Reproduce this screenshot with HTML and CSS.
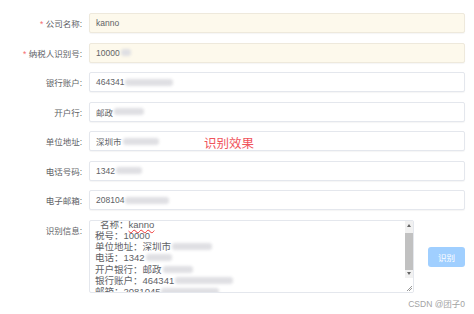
FILE: index.html
```
<!DOCTYPE html>
<html lang="zh">
<head>
<meta charset="utf-8">
<link rel="stylesheet" href="styles.css">
</head>
<body>
<div class="page">
  <form class="form">
    <div class="row">
      <label class="label"><span class="req">*</span> 公司名称:</label>
      <div class="input warn">kanno</div>
    </div>
    <div class="row">
      <label class="label"><span class="req">*</span> 纳税人识别号:</label>
      <div class="input warn">10000<span class="blur b1"></span></div>
    </div>
    <div class="row">
      <label class="label">银行账户:</label>
      <div class="input">464341<span class="blur b2"></span></div>
    </div>
    <div class="row">
      <label class="label">开户行:</label>
      <div class="input">邮政<span class="blur b3"></span></div>
    </div>
    <div class="row">
      <label class="label">单位地址:</label>
      <div class="input">深圳市<span class="blur b4"></span><span class="effect">识别效果</span></div>
    </div>
    <div class="row">
      <label class="label">电话号码:</label>
      <div class="input">1342<span class="blur b5"></span></div>
    </div>
    <div class="row">
      <label class="label">电子邮箱:</label>
      <div class="input">208104<span class="blur b6"></span></div>
    </div>
    <div class="row area-row">
      <label class="label top">识别信息:</label>
      <div class="textarea">
        <div class="lines">
          <div class="line first">名称：<span class="spell">kanno</span></div>
          <div class="line">税号：10000</div>
          <div class="line">单位地址：深圳市<span class="blur b7"></span></div>
          <div class="line">电话：1342<span class="blur b5"></span></div>
          <div class="line">开户银行：邮政<span class="blur b3"></span></div>
          <div class="line">银行账户：464341<span class="blur b8"></span></div>
          <div class="line">邮箱：2081045<span class="blur b8"></span></div>
        </div>
        <div class="scrollbar">
          <span class="arrow up"></span>
          <span class="track"><span class="thumb"></span></span>
          <span class="arrow down"></span>
          <span class="grip"></span>
        </div>
      </div>
      <button type="button" class="btn">识别</button>
    </div>
  </form>
  <div class="mark">CSDN @团子0</div>
</div>
</body>
</html>
```
FILE: styles.css
```
* { box-sizing: border-box; }
html, body { margin: 0; padding: 0; background: #fff; }
body {
  width: 474px; height: 314px; overflow: hidden;
  font-family: "Liberation Sans", "Noto Sans CJK SC", sans-serif;
  color: #606266;
}
.page { position: relative; width: 474px; height: 314px; }
.form {
  display: flex; flex-direction: column; gap: 9.5px;
  padding-top: 13px;
}
.row { display: flex; align-items: center; height: 20px; }
.label {
  width: 89px; flex: none; text-align: right; padding-right: 7px;
  font-size: 8.5px; color: #606266; white-space: nowrap;
}
.req { color: #f56c6c; }
.input {
  position: relative;
  width: 376px; height: 20px; flex: none;
  border: 1px solid #e4e7ed; border-radius: 2px;
  box-shadow: 0 1px 1px rgba(0,0,0,0.04);
  background: #fff;
  display: flex; align-items: center;
  padding-left: 6px;
  font-size: 8.5px; color: #606266; white-space: nowrap;
}
.input.warn { background: #fdf9ec; border-color: #eee9dc; }
.blur {
  display: inline-block; height: 7px; background: #dfdfe3;
  filter: blur(1.5px); border-radius: 3px; margin-left: 1px;
}
.b1 { width: 10px; }
.b2 { width: 48px; }
.b3 { width: 30px; }
.b4 { width: 36px; }
.b5 { width: 26px; }
.b6 { width: 44px; }
.b7 { width: 40px; }
.b8 { width: 58px; }
.effect {
  position: absolute; left: 114px; top: 1px;
  font-size: 12.5px; color: #f0545c; font-family: "Noto Sans CJK SC", sans-serif;
}
.area-row { height: 73px; align-items: stretch; margin-top: 0.5px; }
.label.top { padding-top: 4px; }
.textarea {
  position: relative; width: 325px; height: 73px; flex: none;
  border: 1px solid #e4e7ed; border-radius: 2px; overflow: hidden;
  background: #fff;
}
.lines { margin-top: -2.5px; padding-left: 5px; }
.line { font-size: 9.5px; line-height: 11.3px; color: #606266; white-space: nowrap; }
.line.first { padding-left: 5px; }
.spell { text-decoration: underline wavy #e33; text-decoration-thickness: 0.6px; }
.scrollbar {
  position: absolute; right: 0; top: 0; bottom: 0; width: 8px;
  background: #f1f1f1; display: flex; flex-direction: column;
}
.arrow { height: 9px; position: relative; flex: none; }
.arrow.up::after, .arrow.down::after {
  content: ""; position: absolute; left: 2px; top: 3px;
  border-left: 2px solid transparent; border-right: 2px solid transparent;
}
.arrow.up::after { border-bottom: 3px solid #666; }
.arrow.down::after { border-top: 3px solid #666; }
.track { flex: 1; position: relative; }
.thumb { position: absolute; left: 0; right: 0; top: 3px; height: 37px; background: #c1c1c1; }
.grip { height: 14px; flex: none; background: #fff; position: relative; }
.grip::after {
  content: ""; position: absolute; right: 1px; bottom: 1px; width: 5px; height: 5px;
  background: linear-gradient(135deg, transparent 45%, #999 45%, #999 55%, transparent 55%, transparent 70%, #999 70%, #999 80%, transparent 80%);
}
.btn {
  align-self: center; margin-left: 14px;
  width: 37px; height: 20px; border: none; border-radius: 3px;
  background: #a0cfff; color: #fff; font-size: 8.5px; padding: 0;
  font-family: "Noto Sans CJK SC", sans-serif;
}
.mark {
  position: absolute; right: 9px; top: 297px;
  font-size: 8.5px; color: #a3a3a3; white-space: nowrap;
}
```
